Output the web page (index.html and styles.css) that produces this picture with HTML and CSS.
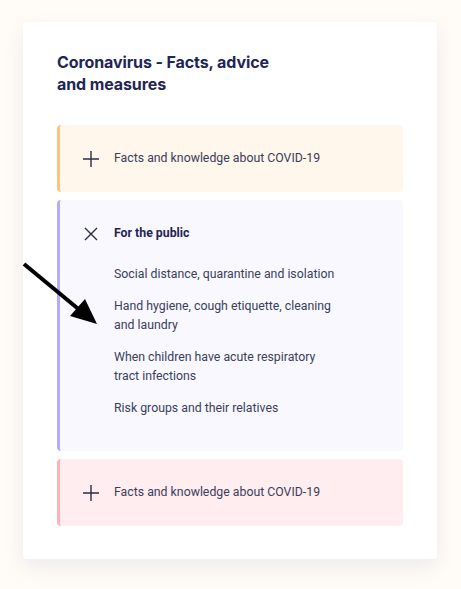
FILE: index.html
```html
<!DOCTYPE html>
<html lang="en">
<head>
<meta charset="utf-8">
<title>Coronavirus - Facts, advice and measures</title>
<link rel="stylesheet" href="styles.css">
</head>
<body>
<div class="page">
  <section class="card">
    <h1 class="title">Coronavirus - Facts, advice<br>and measures</h1>
    <div class="accordion">
      <div class="item item-orange">
        <div class="head">
          <svg class="icon" viewBox="0 0 18 18" width="18" height="18"><path d="M9 1v16M1 9h16" stroke="#2b2f45" stroke-width="1.4" fill="none"/></svg>
          <span class="label">Facts and knowledge about COVID-19</span>
        </div>
      </div>
      <div class="item item-purple">
        <div class="head">
          <svg class="icon" viewBox="0 0 18 18" width="18" height="18"><path d="M3 3l12 12M15 3L3 15" stroke="#2b2f45" stroke-width="1.4" fill="none"/></svg>
          <span class="label strong">For the public</span>
        </div>
        <ul class="links">
          <li>Social distance, quarantine and isolation</li>
          <li>Hand hygiene, cough etiquette, cleaning and laundry</li>
          <li>When children have acute respiratory tract infections</li>
          <li>Risk groups and their relatives</li>
        </ul>
      </div>
      <div class="item item-pink">
        <div class="head">
          <svg class="icon" viewBox="0 0 18 18" width="18" height="18"><path d="M9 1v16M1 9h16" stroke="#2b2f45" stroke-width="1.4" fill="none"/></svg>
          <span class="label">Facts and knowledge about COVID-19</span>
        </div>
      </div>
    </div>
  </section>
  <svg class="arrow" viewBox="0 0 80 70" width="80" height="70">
    <path d="M2 3L60 51" stroke="#000" stroke-width="4" fill="none"/>
    <polygon points="48,55 63,38 75,63" fill="#000"/>
  </svg>
</div>
</body>
</html>
```
FILE: styles.css
```css
html, body {
  margin: 0;
  padding: 0;
  background: #fffcf7;
}
body {
  font-family: Roboto, "Noto Sans", sans-serif;
  color: #2f3452;
}
.page {
  position: relative;
  padding: 22px 24px 28px 23px;
}
.card {
  width: 414px;
  box-sizing: border-box;
  background: #ffffff;
  border-radius: 4px;
  box-shadow: 0 8px 20px rgba(200, 200, 220, 0.35);
  padding: 29px 34px 33px 34px;
}
.title {
  margin: 0 0 30px 0;
  font-family: Inter, "Noto Sans", sans-serif;
  font-size: 16px;
  line-height: 22px;
  font-weight: 700;
  color: #1f2556;
  letter-spacing: -0.1px;
}
.accordion {
  display: flex;
  flex-direction: column;
  gap: 8px;
}
.item {
  border-radius: 4px;
  border-left: 3px solid;
  padding: 24px 20px 24px 22px;
}
.item-orange { background: #fff6ec; border-left-color: #ffc27f; }
.item-purple { background: #f9f8ff; border-left-color: #b5abff; padding-bottom: 33px; }
.item-pink { background: #ffedf0; border-left-color: #ffb0bc; }
.head {
  display: flex;
  align-items: center;
  gap: 14px;
  height: 19px;
}
.icon { flex: none; }
.label {
  font-size: 12.3px;
  line-height: 19px;
  color: #3a3e5a;
}
.label.strong {
  font-weight: 700;
  color: #1f2556;
}
.links {
  list-style: none;
  margin: 22px 0 0 32px;
  padding: 0;
  max-width: 223px;
  display: flex;
  flex-direction: column;
  gap: 13px;
}
.links li {
  font-size: 12.3px;
  line-height: 19px;
  color: #3a3e5a;
}
.arrow {
  position: absolute;
  left: 22px;
  top: 261px;
}
```
